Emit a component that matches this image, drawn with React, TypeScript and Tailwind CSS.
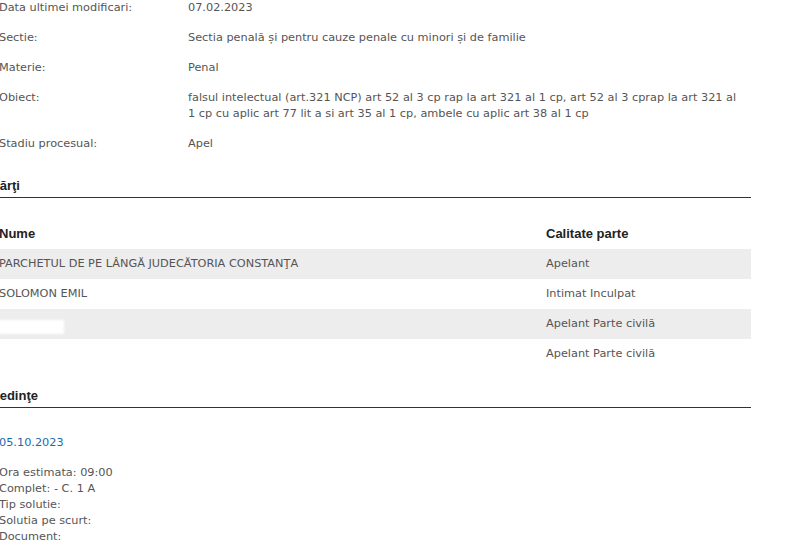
const info = [
  { label: 'Data ultimei modificari:', value: '07.02.2023' },
  { label: 'Sectie:', value: 'Sectia penală și pentru cauze penale cu minori și de familie' },
  { label: 'Materie:', value: 'Penal' },
  {
    label: 'Obiect:',
    value:
      'falsul intelectual (art.321 NCP) art 52 al 3 cp rap la art 321 al 1 cp, art 52 al 3 cprap la art 321 al 1 cp cu aplic art 77 lit a si art 35 al 1 cp, ambele cu aplic art 38 al 1 cp',
  },
  { label: 'Stadiu procesual:', value: 'Apel' },
];

const parti = [
  { nume: 'PARCHETUL DE PE LÂNGĂ JUDECĂTORIA CONSTANŢA', calitate: 'Apelant' },
  { nume: 'SOLOMON EMIL', calitate: 'Intimat Inculpat' },
  { nume: '', calitate: 'Apelant Parte civilă', hidden: true },
  { nume: '', calitate: 'Apelant Parte civilă' },
];

const sedinta = ['Ora estimata: 09:00', 'Complet: - C. 1 A', 'Tip solutie:', 'Solutia pe scurt:', 'Document:'];

function SectionTitle({ children, className }: { children: string; className: string }) {
  return (
    <div
      className={`border-b border-[#333] pb-[3px] font-['Liberation_Sans',Arial,sans-serif] text-[13px] leading-4 font-bold text-[#222] ${className}`}
    >
      <span className="-ml-[9px] block">{children}</span>
    </div>
  );
}

export default function App() {
  return (
    <div className="min-h-[555px] w-[788px] overflow-hidden bg-white font-['DejaVu_Sans',Verdana,sans-serif] text-[11.3px] text-[#555]">
      <div className="w-[751px]">
        {info.map((row) => (
          <div key={row.label} className="mb-[14px] -ml-px flex leading-4">
            <div className="w-[189px] shrink-0">{row.label}</div>
            <div className="w-[554px]">{row.value}</div>
          </div>
        ))}

        <SectionTitle className="mt-[26px]">Părţi</SectionTitle>

        <div className="mt-[21px] grid h-[30px] grid-cols-[546px_1fr] items-center font-['Liberation_Sans',Arial,sans-serif] text-[13px] font-bold text-[#222]">
          <div className="-ml-px">Nume</div>
          <div>Calitate parte</div>
        </div>
        {parti.map((p, i) => (
          <div
            key={i}
            className={`grid h-[30px] grid-cols-[546px_1fr] items-center pt-px ${i % 2 === 0 ? 'bg-[#ededed]' : 'bg-white'}`}
          >
            <div className="-ml-px">
              {p.hidden ? <div className="mt-[4px] h-[14px] w-[65px] bg-white blur-[1px]" /> : p.nume}
            </div>
            <div>{p.calitate}</div>
          </div>
        ))}

        <SectionTitle className="mt-[19px]">Şedinţe</SectionTitle>

        <div className="mt-[27px] -ml-px leading-4 text-[#1a6aad]">05.10.2023</div>
        <div className="mt-[14px] -ml-px leading-4">
          {sedinta.map((s) => (
            <div key={s}>{s}</div>
          ))}
        </div>
      </div>
    </div>
  );
}
